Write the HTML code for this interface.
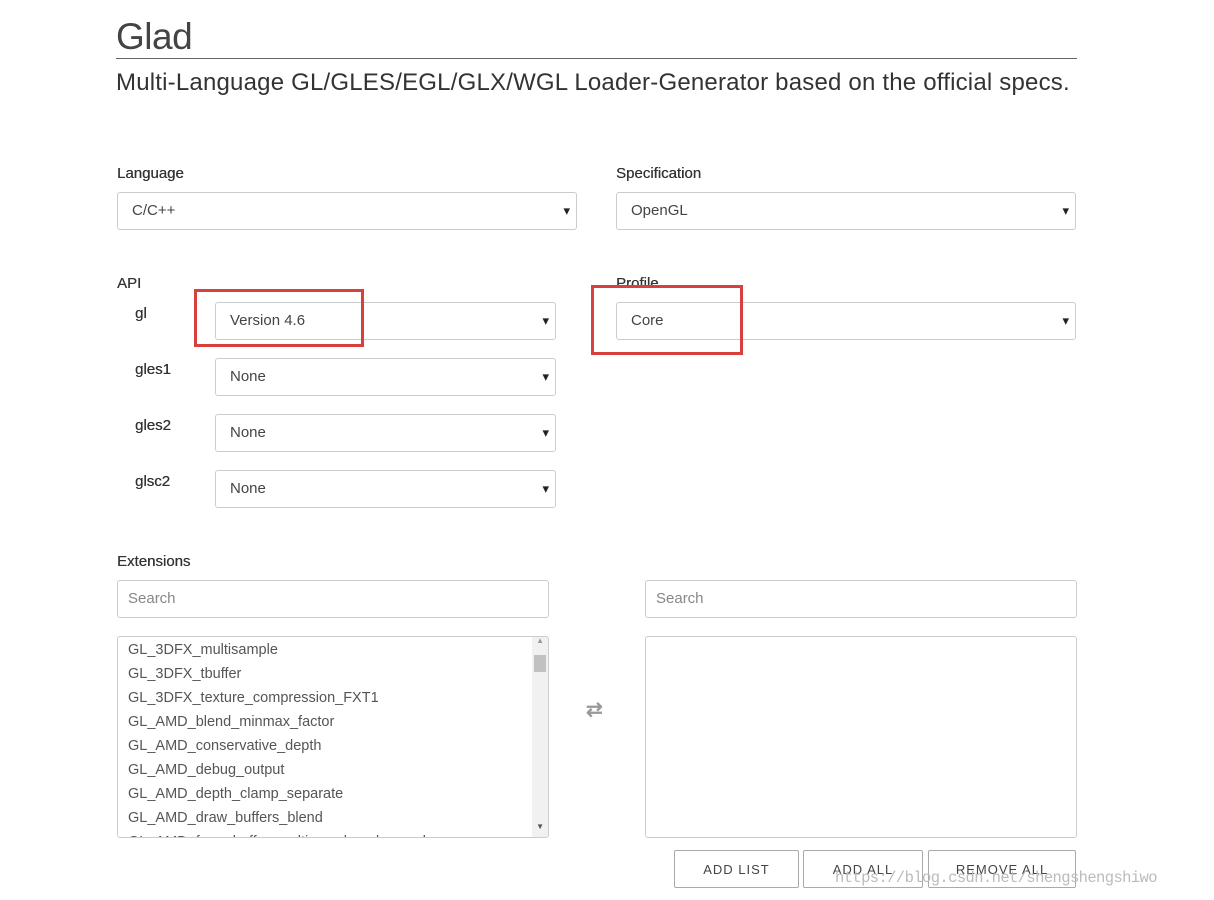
<!DOCTYPE html><html><head><style>
body{margin:0;width:1214px;height:900px;background:#fff;font-family:"Liberation Sans",sans-serif;color:#333;position:relative;overflow:hidden}
.a{position:absolute}
.sel{position:absolute;border:1px solid #ccc;border-radius:3px;height:38px;box-sizing:border-box;font-size:15px;line-height:36px;padding-left:14px;color:#444}
.sel:after{content:"▾";position:absolute;right:6px;top:0;font-size:13px;color:#222}
.lbl{position:absolute;font-size:15px;color:#333;font-weight:bold;-webkit-text-stroke:0}
.lbl{font-weight:normal;text-shadow:0.3px 0 0 #333}
.inp{position:absolute;border:1px solid #ccc;border-radius:3px;height:38px;box-sizing:border-box;font-size:15px;line-height:36px;padding-left:10px;color:#888}
.btn{position:absolute;border:1px solid #aaa;border-radius:2px;height:38px;box-sizing:border-box;font-size:13px;letter-spacing:1px;line-height:38px;text-align:center;color:#444}
.red{position:absolute;border:3px solid #d6403d;box-sizing:border-box}
</style></head><body>
<div class="a" style="left:116px;top:16px;font-size:37px;color:#444;letter-spacing:-0.5px">Glad</div>
<div class="a" style="left:116px;top:58px;width:961px;border-top:1px solid #666"></div>
<div class="a" style="left:116px;top:69px;font-size:24px;color:#333;letter-spacing:0.2px;word-spacing:0px">Multi-Language GL/GLES/EGL/GLX/WGL Loader-Generator based on the official specs.</div>
<div class="lbl" style="left:117px;top:165px">Language</div>
<div class="sel" style="left:117px;top:192px;width:460px">C/C++</div>
<div class="lbl" style="left:616px;top:165px">Specification</div>
<div class="sel" style="left:616px;top:192px;width:460px">OpenGL</div>
<div class="lbl" style="left:117px;top:275px">API</div>
<div class="lbl" style="left:616px;top:275px">Profile</div>
<div class="sel" style="left:616px;top:302px;width:460px">Core</div>
<div class="lbl" style="left:135px;top:305px">gl</div>
<div class="sel" style="left:215px;top:302px;width:341px">Version 4.6</div>
<div class="lbl" style="left:135px;top:361px">gles1</div>
<div class="sel" style="left:215px;top:358px;width:341px">None</div>
<div class="lbl" style="left:135px;top:417px">gles2</div>
<div class="sel" style="left:215px;top:414px;width:341px">None</div>
<div class="lbl" style="left:135px;top:473px">glsc2</div>
<div class="sel" style="left:215px;top:470px;width:341px">None</div>
<div class="red" style="left:194px;top:289px;width:170px;height:58px"></div>
<div class="red" style="left:591px;top:285px;width:152px;height:70px"></div>
<div class="lbl" style="left:117px;top:553px">Extensions</div>
<div class="inp" style="left:117px;top:580px;width:432px">Search</div>
<div class="inp" style="left:645px;top:580px;width:432px">Search</div>
<div class="a" style="left:117px;top:636px;width:432px;height:202px;border:1px solid #ccc;border-radius:3px;box-sizing:border-box;overflow:hidden;font-size:14.5px;color:#555;line-height:24px;padding:1px 0 0 10px">
GL_3DFX_multisample<br>GL_3DFX_tbuffer<br>GL_3DFX_texture_compression_FXT1<br>GL_AMD_blend_minmax_factor<br>GL_AMD_conservative_depth<br>GL_AMD_debug_output<br>GL_AMD_depth_clamp_separate<br>GL_AMD_draw_buffers_blend<br>GL_AMD_framebuffer_multisample_advanced
<div class="a" style="right:0;top:0;width:16px;height:200px;background:#f1f1f1"></div>
<div class="a" style="right:2px;top:18px;width:12px;height:17px;background:#c1c1c1"></div>
<div class="a" style="right:4px;top:-8px;font-size:8px;color:#999">▲</div>
<div class="a" style="right:4px;top:178px;font-size:8px;color:#555">▼</div>
</div>
<div class="a" style="left:586px;top:697px;font-size:20px;color:#999;font-weight:bold">⇄</div>
<div class="a" style="left:645px;top:636px;width:432px;height:202px;border:1px solid #ccc;border-radius:3px;box-sizing:border-box"></div>
<div class="btn" style="left:674px;top:850px;width:125px">ADD LIST</div>
<div class="btn" style="left:803px;top:850px;width:120px">ADD ALL</div>
<div class="btn" style="left:928px;top:850px;width:148px">REMOVE ALL</div>
<div class="a" style="left:835px;top:869px;font-family:'Liberation Mono',monospace;font-size:15.5px;color:#bbb;letter-spacing:-0.6px">https://blog.csdn.net/shengshengshiwo</div>
</body></html>
